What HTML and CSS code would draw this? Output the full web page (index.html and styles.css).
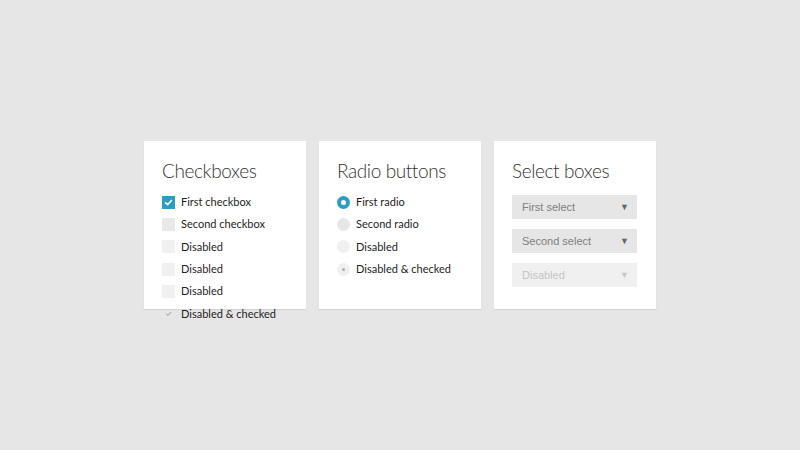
FILE: index.html
```html
<!DOCTYPE html>
<html>
<head>
<meta charset="utf-8">
<link rel="stylesheet" href="styles.css">
</head>
<body>
<div class="stage">
  <section class="card">
    <h2 class="title">Checkboxes</h2>
    <ul class="list">
      <li class="item"><span class="box box-checked"><svg viewBox="0 0 13 13" width="13" height="13"><path d="M3.6 6.8 L5.6 8.7 L9.4 4.6" fill="none" stroke="#fff" stroke-width="1.6" stroke-linecap="round" stroke-linejoin="round"/></svg></span><span class="label">First checkbox</span></li>
      <li class="item"><span class="box"></span><span class="label">Second checkbox</span></li>
      <li class="item"><span class="box box-disabled"></span><span class="label">Disabled</span></li>
      <li class="item"><span class="box box-disabled"></span><span class="label">Disabled</span></li>
      <li class="item"><span class="box box-disabled"></span><span class="label">Disabled</span></li>
      <li class="item"><span class="box box-plain"><svg viewBox="0 0 13 13" width="13" height="13"><path d="M4.4 7 L5.9 8.4 L8.8 5.3" fill="none" stroke="#999" stroke-width="1" stroke-linecap="round" stroke-linejoin="round"/></svg></span><span class="label">Disabled &amp; checked</span></li>
    </ul>
  </section>
  <section class="card">
    <h2 class="title">Radio buttons</h2>
    <ul class="list">
      <li class="item"><span class="radio radio-checked"></span><span class="label">First radio</span></li>
      <li class="item"><span class="radio"></span><span class="label">Second radio</span></li>
      <li class="item"><span class="radio radio-disabled"></span><span class="label">Disabled</span></li>
      <li class="item"><span class="radio radio-disabled radio-dc"></span><span class="label">Disabled &amp; checked</span></li>
    </ul>
  </section>
  <section class="card">
    <h2 class="title">Select boxes</h2>
    <div class="selects">
      <div class="select"><span>First select</span><span class="arrow">▼</span></div>
      <div class="select"><span>Second select</span><span class="arrow">▼</span></div>
      <div class="select select-disabled"><span>Disabled</span><span class="arrow">▼</span></div>
    </div>
  </section>
</div>
</body>
</html>
```
FILE: styles.css
```css
html, body {
  margin: 0;
  padding: 0;
  background: #e6e6e6;
}
body {
  width: 800px;
  height: 450px;
  font-family: "Source Sans Pro", Lato, "Noto Sans", sans-serif;
  color: #222;
}
.stage {
  display: flex;
  justify-content: center;
  align-items: center;
  gap: 13px;
  height: 450px;
}
.card {
  box-sizing: border-box;
  width: 162px;
  height: 168px;
  background: #fff;
  padding: 18px 18px 0;
  box-shadow: 0 1px 1px rgba(0,0,0,0.08);
}
.title {
  margin: 0 0 8px;
  font-family: Lato, sans-serif;
  font-weight: 300;
  font-size: 19px;
  letter-spacing: -0.4px;
  line-height: 24px;
  color: #333;
}
.list {
  list-style: none;
  margin: 0;
  padding: 0;
}
.item {
  display: flex;
  align-items: center;
  height: 22.3px;
  font-size: 11px;
}
.label {
  margin-left: 6px;
  line-height: 14px;
  color: #1e1e1e;
}
.box {
  display: block;
  width: 13px;
  height: 13px;
  background: #e8e8e8;
}
.box svg { display: block; }
.box-checked { background: #2b9dc4; }
.box-disabled { background: #f0f0f0; }
.box-plain { background: transparent; }
.radio {
  display: block;
  box-sizing: border-box;
  width: 13px;
  height: 13px;
  border-radius: 50%;
  background: #e6e6e6;
  position: relative;
}
.radio-checked { background: #2b9dc4; }
.radio-checked::after {
  content: "";
  position: absolute;
  left: 4px;
  top: 4px;
  width: 5px;
  height: 5px;
  border-radius: 50%;
  background: #fff;
}
.radio-disabled { background: #f0f0f0; }
.radio-dc::after {
  content: "";
  position: absolute;
  left: 5px;
  top: 5px;
  width: 3px;
  height: 3px;
  border-radius: 50%;
  background: #aaa;
}
.selects {
  display: flex;
  flex-direction: column;
  gap: 10px;
  margin-top: 12px;
}
.select {
  display: flex;
  align-items: center;
  justify-content: space-between;
  box-sizing: border-box;
  width: 125px;
  height: 24px;
  padding: 0 8px 0 10px;
  background: #e6e6e6;
  font-family: "Liberation Sans", Arial, sans-serif;
  font-size: 11px;
  color: #808080;
}
.arrow {
  font-size: 9px;
  color: #666;
}
.select-disabled {
  background: #f0f0f0;
  color: #c4c4c4;
}
.select-disabled .arrow { color: #c8c8c8; }
```
